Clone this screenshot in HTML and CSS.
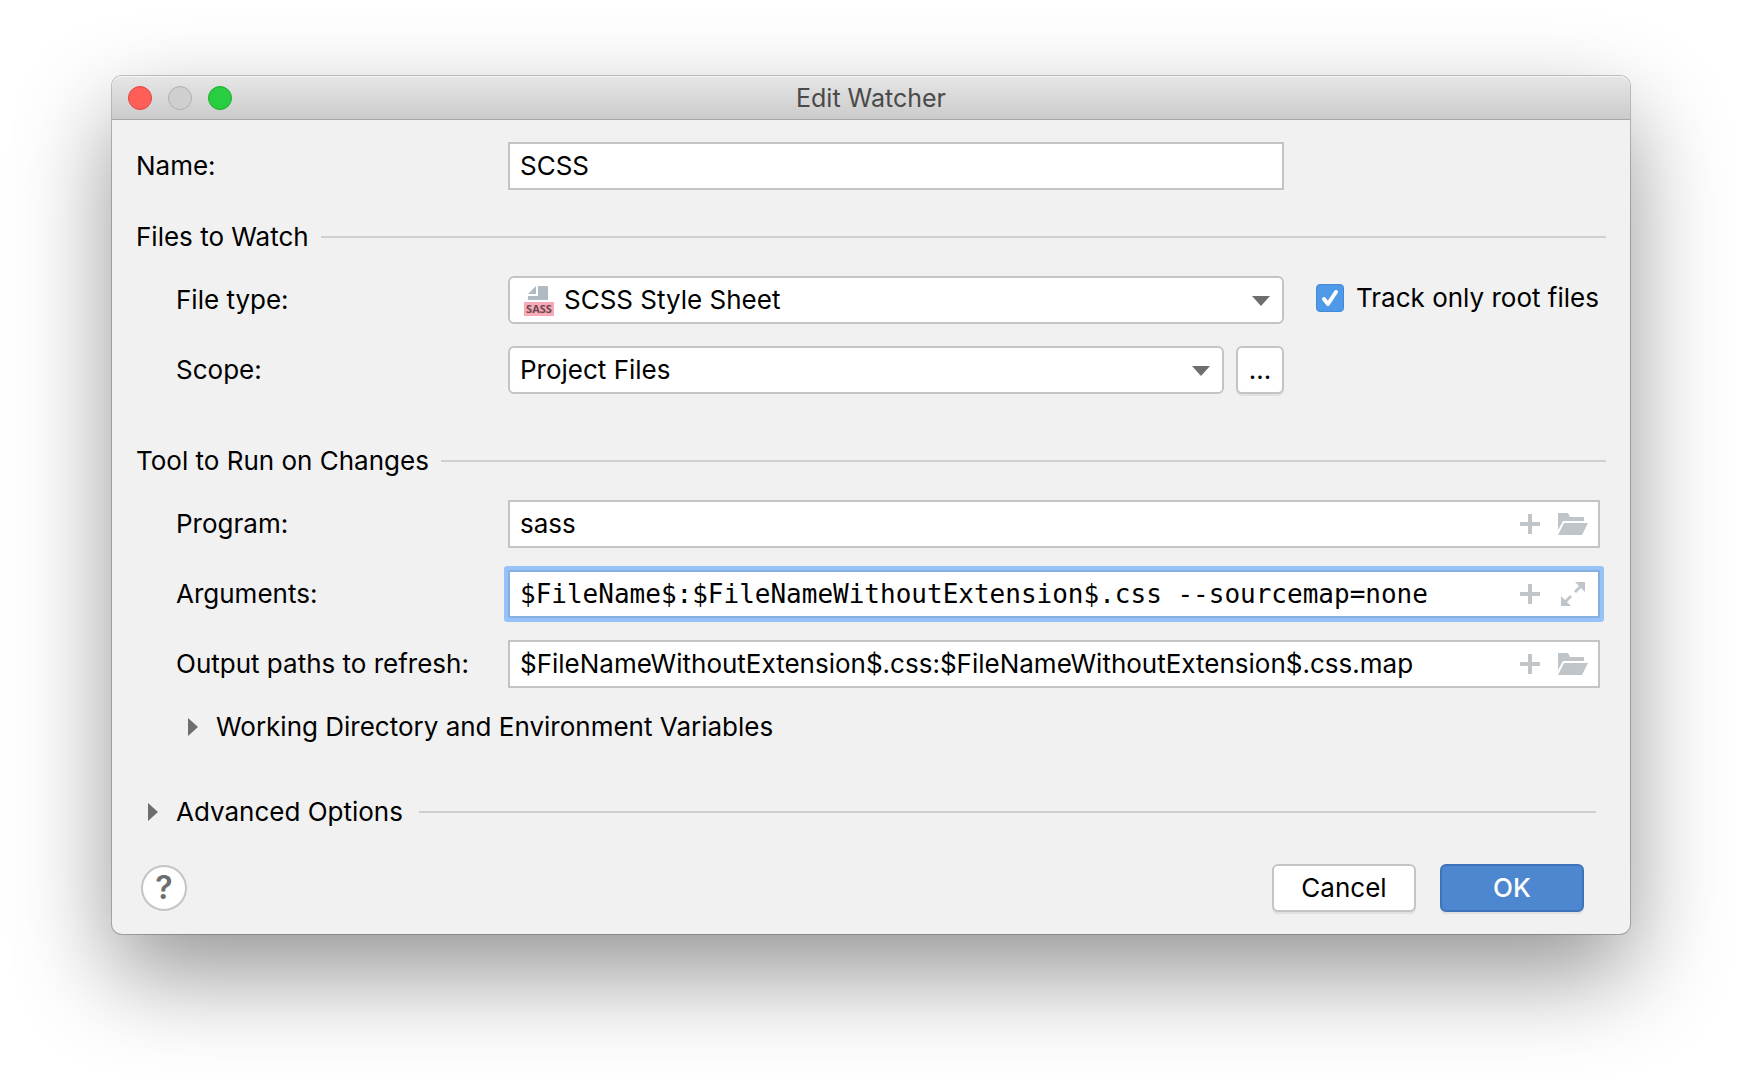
FILE: index.html
```
<!DOCTYPE html>
<html lang="en">
<head>
<meta charset="utf-8">
<title>Edit Watcher</title>
<link rel="stylesheet" href="styles.css">
</head>
<body>
<svg class="defs" aria-hidden="true">
    <symbol id="plus" viewBox="0 0 20 20">
        <path d="M8 0h4v8h8v4h-8v8H8v-8H0V8h8z"/>
    </symbol>
    <symbol id="folder" viewBox="0 0 30 22">
        <path d="M0 0h10l2 4h14v4H5L0 17z"/>
        <path d="M6 10h24l-6 12H0z"/>
    </symbol>
    <symbol id="expand" viewBox="0 0 24 24">
        <path d="M14 0h10v10l-4-4-5 5-2-2 5-5z"/>
        <path d="M0 14l4 4 5-5 2 2-5 5 4 4H0z"/>
    </symbol>
    <symbol id="right" viewBox="0 0 10 18">
        <path d="M0 0l10 9-10 9z"/>
    </symbol>
    <symbol id="down" viewBox="0 0 18 10">
        <path d="M0 0h18l-9 10z"/>
    </symbol>
</svg>

<main class="window">
    <header class="titlebar">
        <div class="lights">
            <button class="light close" type="button" aria-label="Close"></button>
            <button class="light minimize" type="button" aria-label="Minimize" disabled></button>
            <button class="light zoom" type="button" aria-label="Zoom"></button>
        </div>
        <h1 class="title">Edit Watcher</h1>
    </header>

    <form class="content">
        <div class="row">
            <label for="name">Name:</label>
            <div class="field"><input id="name" type="text" value="SCSS"></div>
        </div>

        <h2 class="section">Files to Watch</h2>
        <div class="row sub">
            <label for="type">File type:</label>
            <div class="combo">
                <svg class="filetype" viewBox="0 0 30 30" aria-hidden="true">
                    <path fill="#afbac2" d="M12 0v8H4zM14 0h10v14H4v-4h10z"/>
                    <path fill="#f9a8b6" d="M0 16h30v14H0z"/>
                    <text class="badge" x="15" y="27" text-anchor="middle">SASS</text>
                </svg>
                <select id="type" class="with-icon"><option>SCSS Style Sheet</option></select>
                <svg class="arrow" aria-hidden="true"><use href="#down"/></svg>
            </div>
            <div class="check">
                <span class="box">
                    <input id="track" type="checkbox" checked>
                    <svg class="tick" viewBox="0 0 28 28" aria-hidden="true"><path d="M8 15l4 5 8-12"/></svg>
                </span>
                <label for="track">Track only root files</label>
            </div>
        </div>
        <div class="row sub">
            <label for="scope">Scope:</label>
            <div class="group">
                <div class="combo">
                    <select id="scope"><option>Project Files</option></select>
                    <svg class="arrow" aria-hidden="true"><use href="#down"/></svg>
                </div>
                <button class="btn more" type="button">...</button>
            </div>
        </div>

        <h2 class="section spaced">Tool to Run on Changes</h2>
        <div class="row sub wide">
            <label for="program">Program:</label>
            <div class="field">
                <input id="program" type="text" value="sass">
                <button class="icon" type="button" aria-label="Insert macro"><svg class="plus"><use href="#plus"/></svg></button>
                <button class="icon" type="button" aria-label="Browse"><svg class="folder"><use href="#folder"/></svg></button>
            </div>
        </div>
        <div class="row sub wide">
            <label for="args">Arguments:</label>
            <div class="field focused">
                <input id="args" class="mono" type="text" value="$FileName$:$FileNameWithoutExtension$.css --sourcemap=none">
                <button class="icon" type="button" aria-label="Insert macro"><svg class="plus"><use href="#plus"/></svg></button>
                <button class="icon" type="button" aria-label="Expand"><svg class="expand"><use href="#expand"/></svg></button>
            </div>
        </div>
        <div class="row sub wide">
            <label for="output">Output paths to refresh:</label>
            <div class="field">
                <input id="output" type="text" value="$FileNameWithoutExtension$.css:$FileNameWithoutExtension$.css.map">
                <button class="icon" type="button" aria-label="Insert macro"><svg class="plus"><use href="#plus"/></svg></button>
                <button class="icon" type="button" aria-label="Browse"><svg class="folder"><use href="#folder"/></svg></button>
            </div>
        </div>

        <button class="disclosure nested" type="button"><svg class="caret"><use href="#right"/></svg>Working Directory and Environment Variables</button>
        <div class="advanced">
            <button class="disclosure" type="button"><svg class="caret"><use href="#right"/></svg>Advanced Options</button>
        </div>

        <footer class="footer">
            <button class="help" type="button" aria-label="Help">?</button>
            <div class="actions">
                <button class="btn" type="button">Cancel</button>
                <button class="btn primary" type="submit">OK</button>
            </div>
        </footer>
    </form>
</main>
</body>
</html>
```

FILE: styles.css
```
* {
    box-sizing: border-box;
}
body {
    margin: 0;
    min-height: 100vh;
    padding: 76px 112px;
    background: #fff;
    color: #000;
    font: 26px/32px Inter, "Liberation Sans", sans-serif;
    font-optical-sizing: none;
}
input, select, button {
    margin: 0;
    padding: 0;
    border: 0;
    background: none;
    color: inherit;
    font: inherit;
    font-optical-sizing: inherit;
}
input:focus, select:focus {
    outline: none;
}
h1, h2 {
    margin: 0;
    font-size: inherit;
    font-weight: normal;
}
.defs {
    display: none;
}
.window {
    border-radius: 10px;
    background: #f1f1f1;
    box-shadow: 0 0 0 1px rgba(0,0,0,.22), 0 40px 96px rgba(0,0,0,.42);
}

/* title bar */
.titlebar {
    display: grid;
    grid-template-columns: 1fr auto 1fr;
    align-items: center;
    height: 44px;
    padding: 0 16px;
    border-bottom: 1px solid #a6a6a6;
    border-radius: 10px 10px 0 0;
    background: linear-gradient(#e6e6e6, #cbcbcb);
    box-shadow: inset 0 1px #f5f5f5;
}
.lights {
    display: flex;
    gap: 16px;
}
.light {
    width: 24px;
    height: 24px;
    border: 1px solid;
    border-radius: 50%;
}
.close {
    border-color: #e2453f;
    background: #ff5f57;
}
.minimize {
    border-color: #b0b0b0;
    background: #cfcfcf;
}
.zoom {
    border-color: #1dad2b;
    background: #28cd41;
}
.title {
    color: #4a4a4a;
    font-size: 25px;
}

/* form rows */
.content {
    padding: 22px 24px;
}
.row {
    display: grid;
    grid-template-columns: 372px 1fr 322px;
    align-items: center;
}
.row + .row {
    margin-top: 22px;
}
.sub > label {
    padding-left: 40px;
}
.wide {
    grid-template-columns: 372px 1fr;
    padding-right: 6px;
}
.section {
    display: flex;
    align-items: center;
    gap: 12px;
    margin: 31px 0 23px;
}
.spaced {
    margin-top: 51px;
}
.section::after, .advanced::after {
    content: "";
    flex: 1;
    height: 2px;
    background: #cfcfcf;
}
.field {
    display: flex;
    align-items: center;
    height: 48px;
    padding: 0 10px;
    border: 2px solid #c4c4c4;
    background: #fff;
}
.field input {
    flex: 1;
    min-width: 0;
}
.focused {
    border-color: #87afe0;
    box-shadow: 0 0 0 4px #97c1f9;
    border-radius: 1px;
}
.mono {
    font-family: "DejaVu Sans Mono", monospace;
}
.icon {
    display: flex;
    justify-content: center;
    width: 30px;
    margin-left: 13px;
    fill: #c0c5c9;
}
.plus {
    width: 20px;
    height: 20px;
}
.folder {
    width: 30px;
    height: 22px;
}
.expand {
    width: 24px;
    height: 24px;
}

/* drop-downs */
.group {
    display: flex;
    gap: 12px;
}
.combo {
    position: relative;
    flex: 1;
}
.combo select {
    width: 100%;
    height: 48px;
    padding: 0 48px 0 10px;
    border: 2px solid #c4c4c4;
    border-radius: 6px;
    background: #fff;
    appearance: none;
}
.combo .with-icon {
    padding-left: 54px;
}
.filetype {
    position: absolute;
    left: 16px;
    top: 10px;
    width: 30px;
    height: 30px;
}
.badge {
    fill: #6b4750;
    font: bold 11px "Open Sans", sans-serif;
}
.arrow {
    position: absolute;
    right: 14px;
    top: 20px;
    width: 18px;
    height: 10px;
    fill: #6e6e6e;
    pointer-events: none;
}

/* check box */
.check {
    display: flex;
    align-items: center;
    gap: 12px;
    padding: 0 0 4px 32px;
    white-space: nowrap;
}
.box {
    display: grid;
}
.box > * {
    grid-area: 1 / 1;
    width: 28px;
    height: 28px;
}
.box input {
    border: 1px solid #4389d8;
    border-radius: 4px;
    background: #4f9ae8;
    appearance: none;
}
.tick {
    fill: none;
    stroke: #fff;
    stroke-width: 4;
    stroke-linecap: round;
    stroke-linejoin: round;
    pointer-events: none;
}

/* collapsed groups */
.disclosure {
    display: flex;
    align-items: center;
    gap: 18px;
    padding-left: 12px;
}
.nested {
    margin: 23px 0 0 40px;
}
.caret {
    width: 10px;
    height: 18px;
    fill: #6e6e6e;
}
.advanced {
    display: flex;
    align-items: center;
    gap: 16px;
    margin-top: 53px;
    padding-right: 10px;
}

/* buttons */
.footer {
    display: flex;
    align-items: center;
    justify-content: space-between;
    margin-top: 36px;
    padding: 0 22px 0 5px;
}
.help {
    width: 46px;
    height: 46px;
    border: 2px solid #c4c4c4;
    border-radius: 50%;
    background: #fff;
    color: #6e6e6e;
    font-size: 32px;
    font-weight: 600;
}
.actions {
    display: flex;
    gap: 24px;
}
.btn {
    width: 144px;
    height: 48px;
    border: 2px solid #c4c4c4;
    border-radius: 6px;
    background: #fff;
    box-shadow: 0 2px rgba(0,0,0,.07);
}
.more {
    width: 48px;
}
.primary {
    border-color: #3f74ba;
    background: #4d87cf;
    color: #fff;
    font-weight: 500;
}
```
